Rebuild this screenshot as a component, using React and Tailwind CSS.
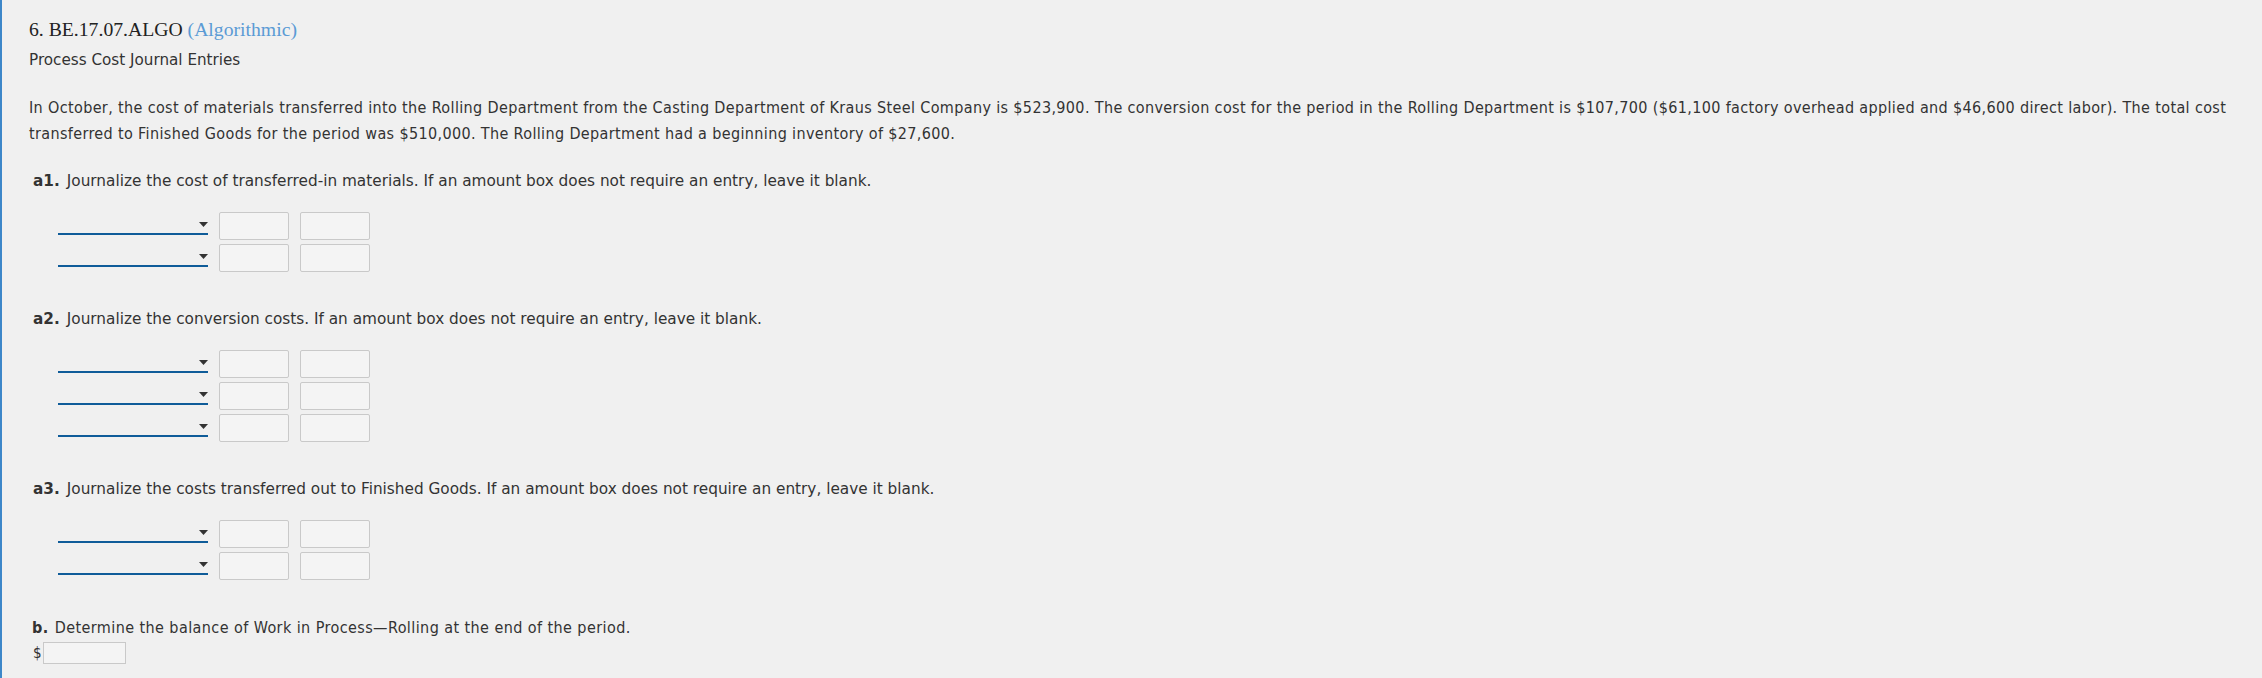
import React from "react";

function Dropdown() {
  return (
    <div className="w-[150px] h-[23px] border-b-2 border-[#0f5c99] flex justify-end items-end pb-[6px]">
      <svg width="9" height="5" viewBox="0 0 9 5" className="block">
        <path d="M0 0 H9 L4.5 5 Z" fill="#333333" />
      </svg>
    </div>
  );
}

function Box() {
  return <div className="w-[70px] h-[28px] border border-[#c9c9c9] bg-[#f4f4f4] rounded-[2px]" />;
}

function Row() {
  return (
    <div className="flex items-start gap-[11px] ml-[29px] h-[28px]">
      <Dropdown />
      <Box />
      <Box />
    </div>
  );
}

function Section({ label, text, rows, top }) {
  return (
    <div className={top}>
      <div className="ml-[4px] h-[20px] leading-[20px] text-[15.3px] text-[#333] font-['DejaVu_Sans',sans-serif] whitespace-nowrap">
        <span className="font-bold">{label}</span>
        <span className="ml-[7px]">{text}</span>
      </div>
      <div className="mt-[21px] flex flex-col gap-[4px]">
        {Array.from({ length: rows }).map((_, i) => (
          <Row key={i} />
        ))}
      </div>
    </div>
  );
}

export default function App() {
  return (
    <div className="w-[2262px] h-[678px] bg-[#f0f0f0] border-l-2 border-[#3d87c9] pl-[27px] overflow-hidden">
      <div className="pt-[17px] h-[41px] leading-[24px] text-[19.7px] text-[#222] font-['Liberation_Serif',serif] whitespace-nowrap">
        6. BE.17.07.ALGO <span className="text-[#5b9bd5]">(Algorithmic)</span>
      </div>
      <div className="mt-[9px] h-[20px] leading-[20px] text-[15.2px] text-[#333] font-['DejaVu_Sans',sans-serif] whitespace-nowrap">
        Process Cost Journal Entries
      </div>
      <div className="mt-[25px] leading-[26px] text-[16px] tracking-[0.36px] text-[#333] font-['DejaVu_Sans_Condensed','DejaVu_Sans',sans-serif] whitespace-nowrap">
        In October, the cost of materials transferred into the Rolling Department from the Casting Department of Kraus Steel Company is $523,900. The conversion cost for the period in the Rolling Department is $107,700 ($61,100 factory overhead applied and $46,600 direct labor). The total cost
        <br />
        transferred to Finished Goods for the period was $510,000. The Rolling Department had a beginning inventory of $27,600.
      </div>
      <Section
        top="mt-[24px]"
        label="a1."
        text="Journalize the cost of transferred-in materials. If an amount box does not require an entry, leave it blank."
        rows={2}
      />
      <Section
        top="mt-[37px]"
        label="a2."
        text="Journalize the conversion costs. If an amount box does not require an entry, leave it blank."
        rows={3}
      />
      <Section
        top="mt-[37px]"
        label="a3."
        text="Journalize the costs transferred out to Finished Goods. If an amount box does not require an entry, leave it blank."
        rows={2}
      />
      <div className="mt-[38px] ml-[3px] h-[20px] leading-[20px] text-[16px] tracking-[0.42px] text-[#333] font-['DejaVu_Sans_Condensed','DejaVu_Sans',sans-serif] whitespace-nowrap">
        <span className="font-bold">b.</span>
        <span className="ml-[6px]">Determine the balance of Work in Process—Rolling at the end of the period.</span>
      </div>
      <div className="mt-[4px] flex items-center ml-[4px]">
        <span className="text-[15px] text-[#333] font-['DejaVu_Sans_Condensed','DejaVu_Sans',sans-serif] leading-[22px]">$</span>
        <div className="ml-[1px] w-[83px] h-[22px] border border-[#c9c9c9] bg-[#f4f4f4]" />
      </div>
    </div>
  );
}
